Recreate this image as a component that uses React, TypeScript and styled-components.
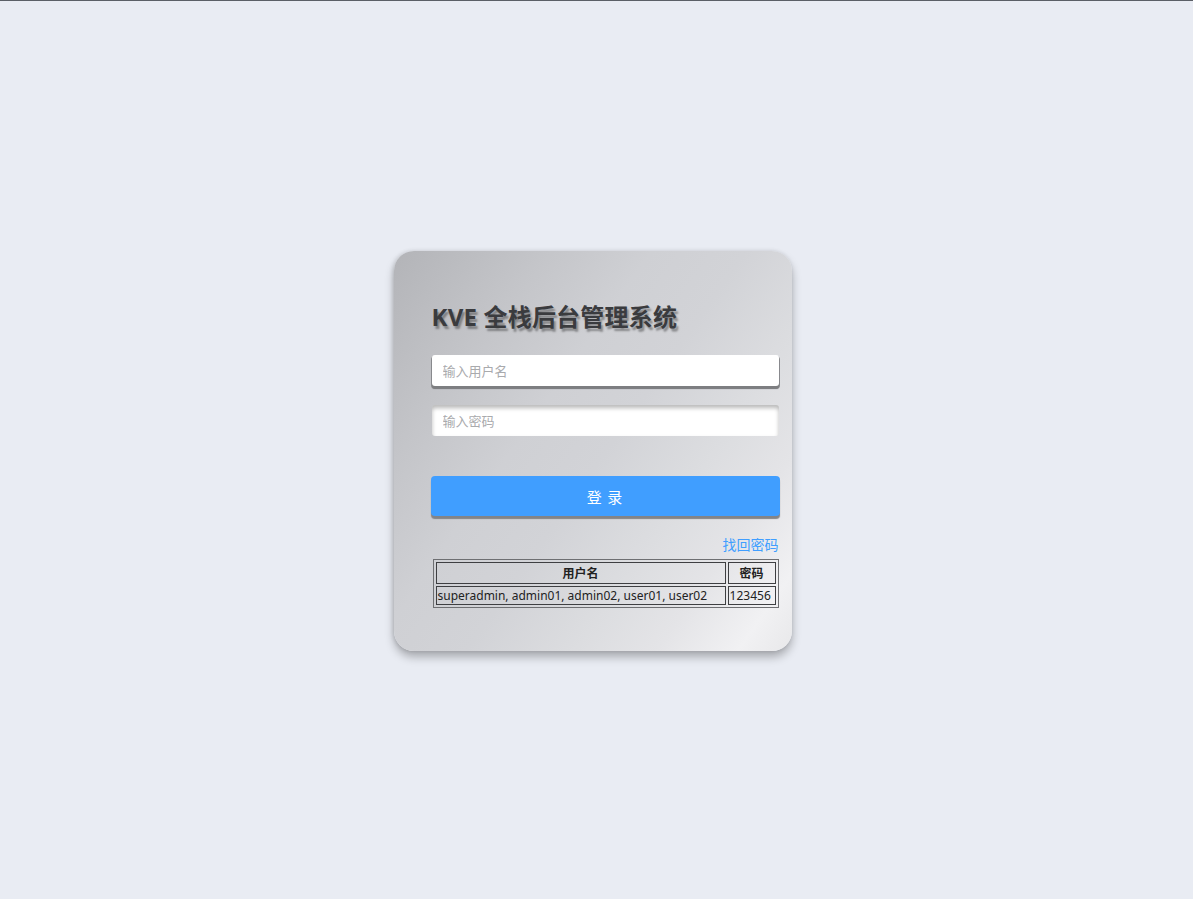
import styled, { createGlobalStyle } from 'styled-components'

const GlobalStyle = createGlobalStyle`
  html, body {
    margin: 0;
    padding: 0;
  }
  body {
    background: #e9ecf3;
    border-top: 1px solid #5b5f66;
    font-family: "Noto Sans", "Noto Sans CJK SC", sans-serif;
  }
`

const accounts = [
  { names: 'superadmin, admin01, admin02, user01, user02', password: '123456' },
]

const App = () => {
  return (
    <>
      <GlobalStyle />
      <Page>
        <Card>
          <Title>KVE 全栈后台管理系统</Title>
          <Input type="text" placeholder="输入用户名" $raised />
          <Input type="password" placeholder="输入密码" />
          <LoginButton type="button">登 录</LoginButton>
          <LinkRow>
            <Link href="#">找回密码</Link>
          </LinkRow>
          <Table>
            <thead>
              <tr>
                <Th>用户名</Th>
                <Th>密码</Th>
              </tr>
            </thead>
            <tbody>
              {accounts.map((a) => (
                <tr key={a.password}>
                  <Td>{a.names}</Td>
                  <Td>{a.password}</Td>
                </tr>
              ))}
            </tbody>
          </Table>
        </Card>
      </Page>
    </>
  )
}

const Page = styled.div`
  height: 898px;
  display: flex;
  align-items: center;
  justify-content: center;
  padding-right: 8px;
  box-sizing: border-box;
`

const Card = styled.div`
  width: 398px;
  height: 400px;
  box-sizing: border-box;
  padding: 48px 12px 0 38px;
  border-radius: 20px;
  display: flex;
  flex-direction: column;
  background: linear-gradient(
    125deg,
    #b3b4b8 0%,
    #c4c5c9 22%,
    #cfd0d4 38%,
    #d2d3d7 52%,
    #dcdde0 68%,
    #e4e4e7 80%,
    #f1f1f3 92%,
    #e8e8ea 100%
  );
  box-shadow: 0 6px 10px rgba(0, 0, 0, 0.28), -1px 0 4px rgba(0, 0, 0, 0.12);
  margin-top: 2px;
`

const Title = styled.h1`
  margin: 0 0 20px 0;
  font-size: 24px;
  line-height: 36px;
  font-weight: 700;
  color: #3a3b3e;
  letter-spacing: 0.2px;
  text-shadow: 2px 3px 2px rgba(0, 0, 0, 0.35);
  white-space: nowrap;
`

const Input = styled.input<{ $raised?: boolean }>`
  width: 347px;
  height: 31px;
  box-sizing: border-box;
  margin: 0 0 19px 0;
  padding: 0 11px;
  border: none;
  outline: none;
  border-radius: 3px;
  background: #fff;
  font-family: "Noto Sans CJK SC", "Noto Sans", sans-serif;
  font-size: 13px;
  color: #333;
  box-shadow: ${(p) =>
    p.$raised
      ? '0 3px 1px #7d7e81, 0 2px 0 1px #8a8b8e'
      : 'inset 0 3px 4px rgba(0, 0, 0, 0.28)'};

  &::placeholder {
    color: #a9aaad;
  }
`

const LoginButton = styled.button`
  width: 349px;
  height: 40px;
  margin: 21px 0 0 -1px;
  border: none;
  border-radius: 4px;
  background: #409eff;
  color: #fff;
  font-family: "Noto Sans CJK SC", "Noto Sans", sans-serif;
  font-size: 15px;
  letter-spacing: 1px;
  cursor: pointer;
  box-shadow: 0 3px 1px #838487;
`

const LinkRow = styled.div`
  display: flex;
  justify-content: flex-end;
  margin-top: 17px;
  width: 347px;
`

const Link = styled.a`
  font-family: "Noto Sans CJK SC", "Noto Sans", sans-serif;
  font-size: 14px;
  line-height: 22px;
  color: #409eff;
  text-decoration: none;
`

const Table = styled.table`
  margin: 4px 0 0 1px;
  width: 346px;
  border: 1px solid #6e6f72;
  border-spacing: 2px;
  font-family: "Noto Sans", "Noto Sans CJK SC", sans-serif;
  font-size: 12px;
  color: #222;
`

const Th = styled.th`
  border: 1px solid #3e3f42;
  font-family: "Noto Sans CJK SC", "Noto Sans", sans-serif;
  font-weight: 700;
  font-size: 12px;
  line-height: 20px;
  padding: 0 1px;
`

const Td = styled.td`
  border: 1px solid #3e3f42;
  line-height: 17px;
  padding: 0 1px;
  white-space: nowrap;
`

export default App
